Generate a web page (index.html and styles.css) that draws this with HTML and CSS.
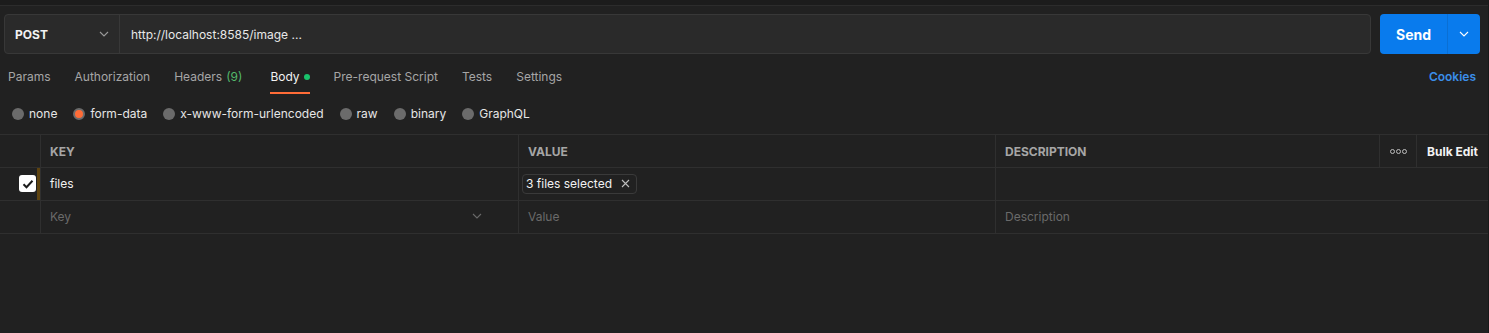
FILE: index.html
```html
<!DOCTYPE html>
<html>
<head>
<meta charset="utf-8">
<link rel="stylesheet" href="styles.css">
</head>
<body>
<div class="app">
  <div class="topstrip"></div>
  <div class="request-bar">
    <div class="url-group">
      <div class="method">
        <span>POST</span>
        <svg class="chev" width="10" height="6" viewBox="0 0 10 6"><path d="M1 1l4 4 4-4" fill="none" stroke="#9a9a9a" stroke-width="1.1"/></svg>
      </div>
      <div class="url">http://localhost:8585/image ...</div>
    </div>
    <div class="send">
      <div class="send-label">Send</div>
      <div class="send-drop">
        <svg width="10" height="6" viewBox="0 0 10 6"><path d="M1 1l4 4 4-4" fill="none" stroke="#fff" stroke-width="1.1"/></svg>
      </div>
    </div>
  </div>
  <div class="tabs-row">
    <div class="tabs">
      <div class="tab">Params</div>
      <div class="tab">Authorization</div>
      <div class="tab tab-headers">Headers <span class="count">(9)</span></div>
      <div class="tab active">Body <span class="dot"></span></div>
      <div class="tab">Pre-request Script</div>
      <div class="tab">Tests</div>
      <div class="tab">Settings</div>
    </div>
    <div class="cookies">Cookies</div>
  </div>
  <div class="radios">
    <div class="radio"><span class="circle"></span>none</div>
    <div class="radio"><span class="circle on"></span>form-data</div>
    <div class="radio"><span class="circle"></span>x-www-form-urlencoded</div>
    <div class="radio"><span class="circle"></span>raw</div>
    <div class="radio"><span class="circle"></span>binary</div>
    <div class="radio"><span class="circle"></span>GraphQL</div>
  </div>
  <div class="table">
    <div class="row head">
      <div class="cell c-check"></div>
      <div class="cell c-key">KEY</div>
      <div class="cell c-val">VALUE</div>
      <div class="cell c-desc">DESCRIPTION</div>
      <div class="cell c-more"><span class="ooo"><i></i><i></i><i></i></span></div>
      <div class="cell c-bulk">Bulk Edit</div>
    </div>
    <div class="row">
      <div class="cell c-check">
        <span class="checkbox"><svg width="12" height="10" viewBox="0 0 12 10"><path d="M1.5 5.2l3 3 6-6.5" fill="none" stroke="#1b1b1b" stroke-width="2"/></svg></span>
        <span class="marker"></span>
      </div>
      <div class="cell c-key text">files</div>
      <div class="cell c-val chipcell"><span class="chip">3 files selected <svg width="9" height="9" viewBox="0 0 9 9"><path d="M1 1l7 7M8 1l-7 7" stroke="#bdbdbd" stroke-width="1.1"/></svg></span></div>
      <div class="cell c-descwide"></div>
    </div>
    <div class="row">
      <div class="cell c-check"></div>
      <div class="cell c-key ph">Key<svg class="kchev" width="10" height="6" viewBox="0 0 10 6"><path d="M1 1l4 4 4-4" fill="none" stroke="#6a6a6a" stroke-width="1.1"/></svg></div>
      <div class="cell c-val ph">Value</div>
      <div class="cell c-descwide ph">Description</div>
    </div>
  </div>
</div>
</body>
</html>
```

FILE: styles.css
```css
html, body {
  margin: 0;
  padding: 0;
  background: #212121;
}
body {
  font-family: Inter, "Noto Sans", "Liberation Sans", sans-serif;
  color: #e6e6e6;
  font-size: 12px;
}
.app {
  width: 1488px;
  height: 333px;
  border-right: 1px solid #191919;
  background: #212121;
  overflow: hidden;
}
.topstrip {
  height: 5px;
  background: #1c1c1c;
  border-bottom: 1px solid #2c2c2c;
}
.request-bar {
  display: flex;
  gap: 9px;
  padding: 8px 8px 0 4px;
  height: 40px;
}
.url-group {
  flex: 1;
  display: flex;
  background: #2a2a2a;
  border: 1px solid #383838;
  border-radius: 4px;
}
.method {
  width: 115px;
  box-sizing: border-box;
  display: flex;
  align-items: center;
  justify-content: space-between;
  padding: 0 10px 0 10px;
  border-right: 1px solid #383838;
  font-weight: 700;
  font-size: 12px;
  color: #f2f2f2;
}
.url {
  display: flex;
  align-items: center;
  padding-left: 11px;
  font-size: 12px;
  color: #e8e8e8;
}
.send {
  width: 100px;
  display: flex;
  background: #097bed;
  border-radius: 4px;
}
.send-label {
  width: 67px;
  display: flex;
  align-items: center;
  justify-content: center;
  font-weight: 700;
  font-size: 14px;
  color: #fff;
  border-right: 1px solid #0a6fd4;
}
.send-drop {
  flex: 1;
  display: flex;
  align-items: center;
  justify-content: center;
}
.tabs-row {
  display: flex;
  justify-content: space-between;
  padding: 4px 12px 0 8px;
}
.tabs {
  display: flex;
  gap: 24px;
}
.tab {
  padding: 11px 0 7px;
  line-height: 16px;
  font-size: 12px;
  color: #a6a6a6;
  border-bottom: 2px solid transparent;
  display: flex;
  align-items: center;
  gap: 4px;
}
.tab-headers { margin-right: 4px; }
.tab .count { color: #53b76b; }
.tab.active {
  color: #f2f2f2;
  border-bottom-color: #ff6c37;
}
.dot {
  width: 6px;
  height: 6px;
  border-radius: 50%;
  background: #19c26b;
}
.cookies {
  padding-top: 11px;
  line-height: 16px;
  font-size: 12px;
  font-weight: 600;
  color: #3b8ee9;
}
.radios {
  display: flex;
  gap: 16px;
  padding: 0 0 0 12px;
  height: 40px;
  box-sizing: border-box;
  align-items: center;
}
.radio {
  display: flex;
  align-items: center;
  gap: 5px;
  line-height: 16px;
  font-size: 12px;
  color: #e6e6e6;
}
.circle {
  width: 12px;
  height: 12px;
  border-radius: 50%;
  background: #6b6b6b;
  box-sizing: border-box;
}
.circle.on {
  background: #ff6c37;
  border: 2px solid #6b6b6b;
}
.table {
  border-top: 1px solid #2f2f2f;
}
.row {
  display: flex;
  height: 33px;
  box-sizing: border-box;
  border-bottom: 1px solid #2f2f2f;
}
.cell {
  display: flex;
  align-items: center;
  box-sizing: border-box;
  border-right: 1px solid #2f2f2f;
  padding-left: 9px;
  font-size: 12px;
  position: relative;
}
.c-check { width: 41px; padding: 0 0 1px 19px; }
.c-key { width: 478px; }
.c-val { width: 477px; }
.c-val.chipcell { padding-left: 3px; }
.c-desc { width: 384px; }
.c-more { width: 37px; padding: 0; justify-content: center; }
.c-bulk { flex: 1; border-right: none; padding-left: 10px; font-weight: 700; color: #f2f2f2; }
.c-descwide { flex: 1; border-right: none; }
.head .cell { font-weight: 700; color: #a6a6a6; }
.head .c-bulk { color: #f2f2f2; }
.ooo { display: flex; gap: 1px; }
.ooo i {
  width: 3px; height: 3px; border-radius: 50%;
  border: 1px solid #bdbdbd;
}
.checkbox {
  width: 17px; height: 17px;
  border-radius: 3px;
  background: #fff;
  display: flex;
  align-items: center;
  justify-content: center;
}
.marker {
  position: absolute;
  right: 0;
  top: 0;
  bottom: 0;
  width: 3px;
  background: #5e430f;
}
.text { color: #f2f2f2; padding-bottom: 1px; }
.chip {
  display: flex;
  align-items: center;
  gap: 9px;
  height: 20px;
  box-sizing: border-box;
  padding: 0 6px 0 3px;
  border: 1px solid #3a3a3a;
  border-radius: 4px;
  font-size: 12px;
  color: #f2f2f2;
}
.chipcell { padding-bottom: 1px; }
.ph { color: #6a6a6a; padding-bottom: 2px; }
.c-key.ph { justify-content: space-between; padding-right: 36px; }
```
